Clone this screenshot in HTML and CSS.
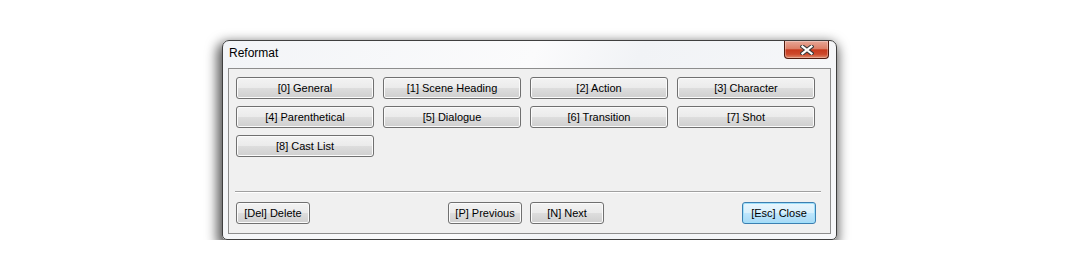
FILE: index.html
```html
<!DOCTYPE html>
<html lang="en">
<head>
    <meta charset="UTF-8">
    <title>Reformat</title>
    <link rel="stylesheet" href="styles.css">
</head>
<body>
    <div class="window">
        <div class="titlebar">
            <span class="title">Reformat</span>
            <button class="close-btn" aria-label="Close">
                <svg width="14" height="10" viewBox="0 0 14 10">
                    <path d="M2.5 1.5 L11.5 8.5 M11.5 1.5 L2.5 8.5" stroke="#3a3a3a" stroke-width="4.2" stroke-linecap="square" fill="none"/>
                    <path d="M2.5 1.5 L11.5 8.5 M11.5 1.5 L2.5 8.5" stroke="#ffffff" stroke-width="2.2" stroke-linecap="square" fill="none"/>
                </svg>
            </button>
        </div>
        <div class="client">
            <div class="grid">
                <button class="btn">[0] General</button>
                <button class="btn">[1] Scene Heading</button>
                <button class="btn">[2] Action</button>
                <button class="btn">[3] Character</button>
                <button class="btn">[4] Parenthetical</button>
                <button class="btn">[5] Dialogue</button>
                <button class="btn">[6] Transition</button>
                <button class="btn">[7] Shot</button>
                <button class="btn">[8] Cast List</button>
            </div>
            <div class="separator"></div>
            <div class="footer">
                <button class="btn small">[Del] Delete</button>
                <div class="nav">
                    <button class="btn small">[P] Previous</button>
                    <button class="btn small">[N] Next</button>
                </div>
                <button class="btn small default">[Esc] Close</button>
            </div>
        </div>
    </div>
</body>
</html>
```

FILE: styles.css
```css
body {
    margin: 0;
    padding: 40px 0 0 222px;
    background: #ffffff;
    font-family: "Liberation Sans", Arial, sans-serif;
}

.window {
    width: 615px;
    box-sizing: border-box;
    padding-bottom: 5px;
    border: 1px solid #3f3f3f;
    border-radius: 7px 7px 5px 5px;
    background: linear-gradient(115deg, #f2f4f7 0%, #fbfbfc 45%, #f1f3f6 60%, #f7f8fa 100%);
    box-shadow: -2px 5px 12px 3px rgba(0, 0, 0, 0.65);
}

.titlebar {
    height: 27px;
    display: flex;
    justify-content: space-between;
    align-items: flex-start;
}

.title {
    padding: 5px 0 0 6px;
    font-size: 12px;
    line-height: 14px;
    color: #000;
}

.close-btn {
    width: 45px;
    height: 18px;
    margin: 0 7px 0 0;
    padding: 0;
    display: flex;
    align-items: center;
    justify-content: center;
    border: 1px solid #4f1a0e;
    border-top: none;
    border-radius: 0 0 4px 4px;
    background: linear-gradient(#e8a797 0%, #dc7f67 45%, #c73a1e 52%, #cd4a2d 78%, #df8a6c 100%);
    box-shadow: inset 0 0 0 1px rgba(255, 255, 255, 0.3);
}

.client {
    margin: 0 5px;
    border: 1px solid #8d8d8d;
    background: #f0f0f0;
    padding: 8px 0 9px 7px;
}

.grid {
    display: grid;
    grid-template-columns: repeat(4, 138px);
    grid-auto-rows: 22px;
    gap: 7px 9px;
}

.btn {
    height: 22px;
    padding: 0;
    border: 1px solid #707070;
    border-radius: 3px;
    background: linear-gradient(#f3f3f3 0%, #ebebeb 48%, #dddddd 52%, #cfcfcf 100%);
    box-shadow: inset 0 0 0 1px #fbfbfb;
    font-family: "Liberation Sans", Arial, sans-serif;
    font-size: 11px;
    color: #000;
    text-align: center;
}

.btn.small {
    width: 74px;
}

.btn.default {
    border-color: #3c7fb1;
    background: linear-gradient(#eaf6fd 0%, #d9f0fc 48%, #bee6fd 52%, #a7d9f5 100%);
    box-shadow: inset 0 0 0 1px #9fe0fb;
}

.separator {
    margin: 34px 0 0 -1px;
    width: 586px;
    height: 1px;
    background: #a0a0a0;
    border-bottom: 1px solid #ffffff;
}

.footer {
    width: 580px;
    margin-top: 9px;
    display: flex;
    justify-content: space-between;
}

.nav {
    display: flex;
    gap: 8px;
}
```
